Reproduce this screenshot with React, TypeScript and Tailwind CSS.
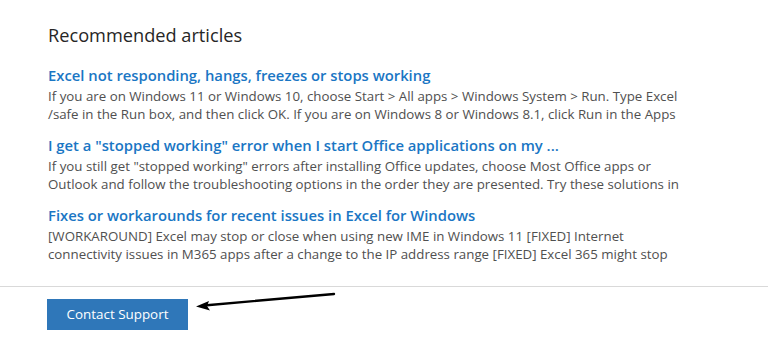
const articles = [
  {
    title: "Excel not responding, hangs, freezes or stops working",
    lines: [
      "If you are on Windows 11 or Windows 10, choose Start > All apps > Windows System > Run. Type Excel",
      "/safe in the Run box, and then click OK. If you are on Windows 8 or Windows 8.1, click Run in the Apps",
    ],
  },
  {
    title: 'I get a "stopped working" error when I start Office applications on my ...',
    lines: [
      'If you still get "stopped working" errors after installing Office updates, choose Most Office apps or',
      "Outlook and follow the troubleshooting options in the order they are presented. Try these solutions in",
    ],
  },
  {
    title: "Fixes or workarounds for recent issues in Excel for Windows",
    lines: [
      "[WORKAROUND] Excel may stop or close when using new IME in Windows 11 [FIXED] Internet",
      "connectivity issues in M365 apps after a change to the IP address range [FIXED] Excel 365 might stop",
    ],
  },
];

export default function App() {
  return (
    <div
      className="relative h-[339px] w-[768px] overflow-hidden bg-white"
      style={{ fontFamily: '"Open Sans", "Noto Sans", sans-serif' }}
    >
      <div className="px-[48px] pt-[22px]">
        <h2 className="text-[18.2px] leading-[26px] text-[#262626]">
          Recommended articles
        </h2>
        <div className="mt-[15px] flex flex-col gap-[10px]">
          {articles.map((a) => (
            <div key={a.title}>
              <a className="block text-[14.8px] font-semibold leading-[24px] text-[#1a76c4]">
                {a.title}
              </a>
              <div className="text-[13.3px] leading-[18px] text-[#505050]">
                {a.lines.map((l) => (
                  <p key={l} className="whitespace-nowrap">
                    {l}
                  </p>
                ))}
              </div>
            </div>
          ))}
        </div>
      </div>

      <div className="mt-[23px] border-t border-[#d9d9d9] pl-[47px] pt-[12px]">
        <button className="h-[31px] w-[141px] bg-[#2f77b9] text-[13.4px] text-white">
          Contact Support
        </button>
      </div>

      {/* annotation arrow pointing at the button */}
      <svg
        className="absolute left-[190px] top-[288px]"
        width="150"
        height="26"
        viewBox="0 0 150 26"
      >
        <line x1="144" y1="6" x2="14" y2="17.5" stroke="#000" strokeWidth="2.4" strokeLinecap="round" />
        <path d="M6 18.5 L19 13 L17 18 L20 22.5 Z" fill="#000" />
      </svg>
    </div>
  );
}
